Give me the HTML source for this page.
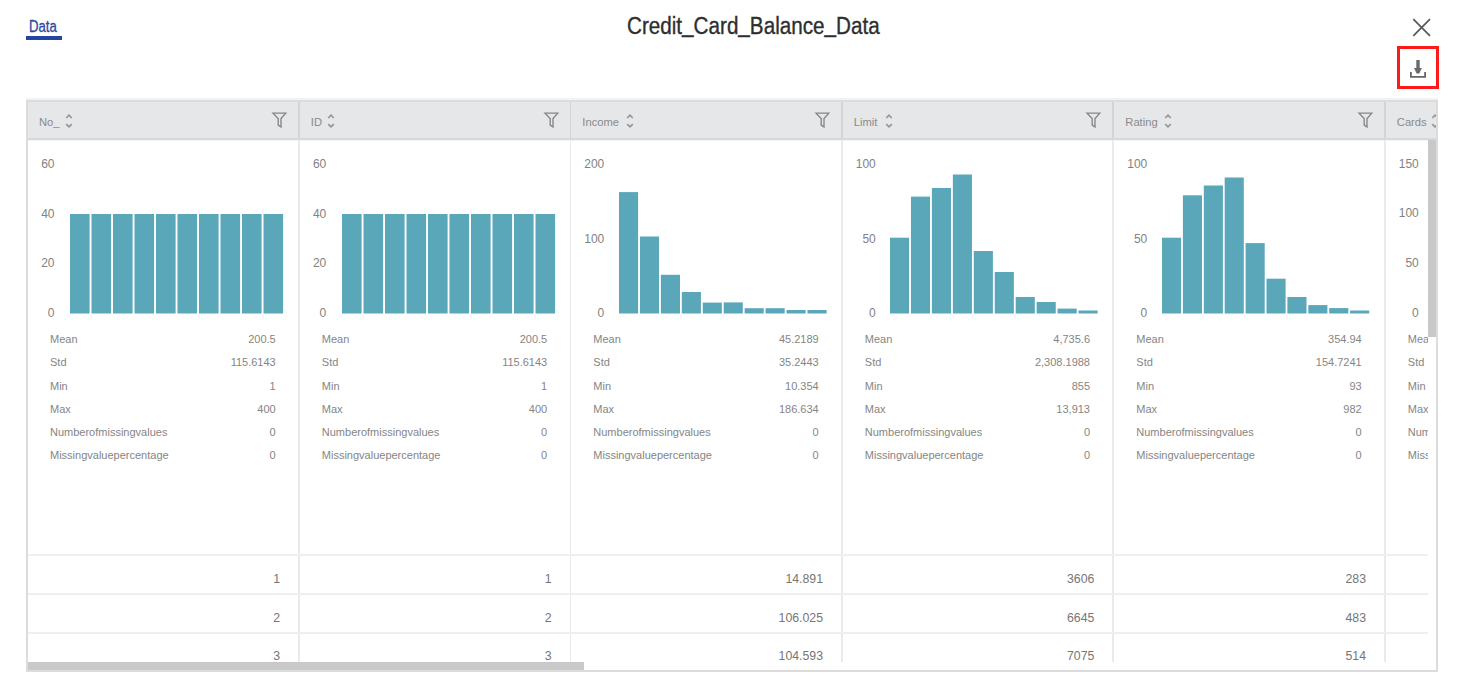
<!DOCTYPE html><html><head><meta charset="utf-8"><style>html,body{margin:0;padding:0;background:#fff;width:1462px;height:694px;overflow:hidden;position:relative;font-family:"Liberation Sans", sans-serif;}.ab{position:absolute;}.t{position:absolute;white-space:nowrap;line-height:14px;height:14px;}.lab{font-size:12px;color:#828282;text-align:right;}.st{font-size:11px;color:#858585;}.rv{font-size:12.3px;color:#767676;}.hd{font-size:11.2px;color:#8a8a8a;}.bar{position:absolute;background:#5ba8bb;box-shadow:inset 0 0 0 0.6px #4f9fb3;}</style></head><body><div class="t" style="left:29.3px;top:18.6px;font-size:15.8px;line-height:16px;height:16px;font-weight:normal;color:#2f4a9e;-webkit-text-stroke:0.3px #2f4a9e;transform:scaleX(0.835);transform-origin:0 0;">Data</div><div class="ab" style="left:26px;top:36px;width:36px;height:3.5px;background:#2546a0;"></div><div class="t" style="left:626.7px;top:13px;height:26px;line-height:26px;font-size:23.5px;color:#2e2e2e;-webkit-text-stroke:0.35px #2e2e2e;transform:scaleX(0.879);transform-origin:0 0;">Credit<span style="position:relative;top:-2.5px">_</span>Card<span style="position:relative;top:-2.5px">_</span>Balance<span style="position:relative;top:-2.5px">_</span>Data</div><svg class="ab" style="left:1411px;top:16.5px" width="21" height="21" viewBox="0 0 21 21"><path d="M2.3 2.2 L19 18.9 M19 2.2 L2.3 18.9" stroke="#5a5a5a" stroke-width="1.75" fill="none"/></svg><div class="ab" style="left:1397px;top:46px;width:35.6px;height:37px;border:3px solid #ff1a1a;box-sizing:content-box;"></div><svg class="ab" style="left:1400px;top:50px" width="36" height="36" viewBox="0 0 36 36"><rect x="16.3" y="10" width="3.4" height="12.5" fill="#6a6a6a"/><path d="M14 17.9 H21.9 L19.2 23.6 H16.7 Z" fill="#6a6a6a"/><path d="M10.9 22 V26.8 H25.1 V22" stroke="#666" stroke-width="1.8" fill="none"/></svg><div class="ab" style="left:26px;top:100px;width:1408px;height:568px;border:2px solid #dcdcdc;"></div><div class="ab" style="left:28px;top:102px;width:1408px;height:36px;background:#e6e7e9;"></div><div class="ab" style="left:28px;top:137.8px;width:1408px;height:2px;background:#d7d8da;"></div><div class="ab" style="left:26px;top:98px;width:1412px;height:2px;background:#f3f3f3;"></div><div class="ab" style="left:28px;top:139.8px;width:1400px;height:1.2px;background:#f6f6f6;"></div><div class="ab" style="left:298.10px;top:102px;width:1.8px;height:36px;background:#d3d4d6;"></div><div class="ab" style="left:298.10px;top:139.5px;width:1.8px;height:522px;background:#eaeaea;"></div><div class="ab" style="left:569.60px;top:102px;width:1.8px;height:36px;background:#d3d4d6;"></div><div class="ab" style="left:569.60px;top:139.5px;width:1.8px;height:522px;background:#eaeaea;"></div><div class="ab" style="left:841.10px;top:102px;width:1.8px;height:36px;background:#d3d4d6;"></div><div class="ab" style="left:841.10px;top:139.5px;width:1.8px;height:522px;background:#eaeaea;"></div><div class="ab" style="left:1112.40px;top:102px;width:1.8px;height:36px;background:#d3d4d6;"></div><div class="ab" style="left:1112.40px;top:139.5px;width:1.8px;height:522px;background:#eaeaea;"></div><div class="ab" style="left:1384.10px;top:102px;width:1.8px;height:36px;background:#d3d4d6;"></div><div class="ab" style="left:1384.10px;top:139.5px;width:1.8px;height:522px;background:#eaeaea;"></div><div class="ab" style="left:28px;top:554.00px;width:1400px;height:2px;background:#efefef;"></div><div class="ab" style="left:28px;top:592.50px;width:1400px;height:2px;background:#efefef;"></div><div class="ab" style="left:28px;top:631.70px;width:1400px;height:2px;background:#efefef;"></div><div class="t hd" id="h0" style="left:39.00px;top:114.5px;">No_</div><div class="t hd" id="h1" style="left:310.80px;top:114.5px;">ID</div><div class="t hd" id="h2" style="left:582.30px;top:114.5px;">Income</div><div class="t hd" id="h3" style="left:853.80px;top:114.5px;">Limit</div><div class="t hd" id="h4" style="left:1125.30px;top:114.5px;">Rating</div><div class="t hd" id="h5" style="left:1396.80px;top:114.5px;">Cards</div><div class="ab" style="left:28px;top:102px;width:1400px;height:560px;overflow:hidden;"><div class="t lab" style="left:12.00px;top:54.50px;width:14.50px;">60</div><div class="t lab" style="left:12.00px;top:105.00px;width:14.50px;">40</div><div class="t lab" style="left:12.00px;top:154.00px;width:14.50px;">20</div><div class="t lab" style="left:12.00px;top:204.00px;width:14.50px;">0</div><svg class="ab" style="left:42.00px;top:48px" width="230" height="180" viewBox="0 0 230 180"><g fill="#5aa7ba"><rect x="0.00" y="64.00" width="19.60" height="99.50"/><rect x="21.50" y="64.00" width="19.60" height="99.50"/><rect x="43.00" y="64.00" width="19.60" height="99.50"/><rect x="64.50" y="64.00" width="19.60" height="99.50"/><rect x="86.00" y="64.00" width="19.60" height="99.50"/><rect x="107.50" y="64.00" width="19.60" height="99.50"/><rect x="129.00" y="64.00" width="19.60" height="99.50"/><rect x="150.50" y="64.00" width="19.60" height="99.50"/><rect x="172.00" y="64.00" width="19.60" height="99.50"/><rect x="193.50" y="64.00" width="19.60" height="99.50"/></g></svg><div class="t st" style="left:22.00px;top:230.10px;">Mean</div><div class="t st" style="right:1152.30px;top:230.10px;">200.5</div><div class="t st" style="left:22.00px;top:253.30px;">Std</div><div class="t st" style="right:1152.30px;top:253.30px;">115.6143</div><div class="t st" style="left:22.00px;top:276.50px;">Min</div><div class="t st" style="right:1152.30px;top:276.50px;">1</div><div class="t st" style="left:22.00px;top:299.70px;">Max</div><div class="t st" style="right:1152.30px;top:299.70px;">400</div><div class="t st" style="left:22.00px;top:322.90px;">Numberofmissingvalues</div><div class="t st" style="right:1152.30px;top:322.90px;">0</div><div class="t st" style="left:22.00px;top:346.00px;">Missingvaluepercentage</div><div class="t st" style="right:1152.30px;top:346.00px;">0</div><div class="t rv" style="right:1148.00px;top:469.60px;">1</div><div class="t rv" style="right:1148.00px;top:508.80px;">2</div><div class="t rv" style="right:1148.00px;top:546.90px;">3</div><div class="t lab" style="left:283.80px;top:54.50px;width:14.50px;">60</div><div class="t lab" style="left:283.80px;top:105.00px;width:14.50px;">40</div><div class="t lab" style="left:283.80px;top:154.00px;width:14.50px;">20</div><div class="t lab" style="left:283.80px;top:204.00px;width:14.50px;">0</div><svg class="ab" style="left:313.50px;top:48px" width="230" height="180" viewBox="0 0 230 180"><g fill="#5aa7ba"><rect x="0.00" y="64.00" width="19.60" height="99.50"/><rect x="21.50" y="64.00" width="19.60" height="99.50"/><rect x="43.00" y="64.00" width="19.60" height="99.50"/><rect x="64.50" y="64.00" width="19.60" height="99.50"/><rect x="86.00" y="64.00" width="19.60" height="99.50"/><rect x="107.50" y="64.00" width="19.60" height="99.50"/><rect x="129.00" y="64.00" width="19.60" height="99.50"/><rect x="150.50" y="64.00" width="19.60" height="99.50"/><rect x="172.00" y="64.00" width="19.60" height="99.50"/><rect x="193.50" y="64.00" width="19.60" height="99.50"/></g></svg><div class="t st" style="left:293.80px;top:230.10px;">Mean</div><div class="t st" style="right:880.80px;top:230.10px;">200.5</div><div class="t st" style="left:293.80px;top:253.30px;">Std</div><div class="t st" style="right:880.80px;top:253.30px;">115.6143</div><div class="t st" style="left:293.80px;top:276.50px;">Min</div><div class="t st" style="right:880.80px;top:276.50px;">1</div><div class="t st" style="left:293.80px;top:299.70px;">Max</div><div class="t st" style="right:880.80px;top:299.70px;">400</div><div class="t st" style="left:293.80px;top:322.90px;">Numberofmissingvalues</div><div class="t st" style="right:880.80px;top:322.90px;">0</div><div class="t st" style="left:293.80px;top:346.00px;">Missingvaluepercentage</div><div class="t st" style="right:880.80px;top:346.00px;">0</div><div class="t rv" style="right:876.50px;top:469.60px;">1</div><div class="t rv" style="right:876.50px;top:508.80px;">2</div><div class="t rv" style="right:876.50px;top:546.90px;">3</div><div class="t lab" style="left:555.30px;top:54.70px;width:21.00px;">200</div><div class="t lab" style="left:555.30px;top:129.50px;width:21.00px;">100</div><div class="t lab" style="left:555.30px;top:204.00px;width:21.00px;">0</div><svg class="ab" style="left:591.00px;top:48px" width="230" height="180" viewBox="0 0 230 180"><g fill="#5aa7ba"><rect x="0.00" y="42.10" width="19.10" height="121.40"/><rect x="20.94" y="86.50" width="19.10" height="77.00"/><rect x="41.88" y="124.80" width="19.10" height="38.70"/><rect x="62.82" y="142.00" width="19.10" height="21.50"/><rect x="83.76" y="152.60" width="19.10" height="10.90"/><rect x="104.70" y="152.40" width="19.10" height="11.10"/><rect x="125.64" y="158.20" width="19.10" height="5.30"/><rect x="146.58" y="158.20" width="19.10" height="5.30"/><rect x="167.52" y="160.00" width="19.10" height="3.50"/><rect x="188.46" y="160.00" width="19.10" height="3.50"/></g></svg><div class="t st" style="left:565.30px;top:230.10px;">Mean</div><div class="t st" style="right:609.30px;top:230.10px;">45.2189</div><div class="t st" style="left:565.30px;top:253.30px;">Std</div><div class="t st" style="right:609.30px;top:253.30px;">35.2443</div><div class="t st" style="left:565.30px;top:276.50px;">Min</div><div class="t st" style="right:609.30px;top:276.50px;">10.354</div><div class="t st" style="left:565.30px;top:299.70px;">Max</div><div class="t st" style="right:609.30px;top:299.70px;">186.634</div><div class="t st" style="left:565.30px;top:322.90px;">Numberofmissingvalues</div><div class="t st" style="right:609.30px;top:322.90px;">0</div><div class="t st" style="left:565.30px;top:346.00px;">Missingvaluepercentage</div><div class="t st" style="right:609.30px;top:346.00px;">0</div><div class="t rv" style="right:605.00px;top:469.60px;">14.891</div><div class="t rv" style="right:605.00px;top:508.80px;">106.025</div><div class="t rv" style="right:605.00px;top:546.90px;">104.593</div><div class="t lab" style="left:826.80px;top:54.50px;width:21.00px;">100</div><div class="t lab" style="left:826.80px;top:129.50px;width:21.00px;">50</div><div class="t lab" style="left:826.80px;top:204.00px;width:21.00px;">0</div><svg class="ab" style="left:862.00px;top:48px" width="230" height="180" viewBox="0 0 230 180"><g fill="#5aa7ba"><rect x="0.00" y="87.70" width="19.10" height="75.80"/><rect x="20.95" y="46.60" width="19.10" height="116.90"/><rect x="41.90" y="38.00" width="19.10" height="125.50"/><rect x="62.85" y="24.50" width="19.10" height="139.00"/><rect x="83.80" y="101.00" width="19.10" height="62.50"/><rect x="104.75" y="122.00" width="19.10" height="41.50"/><rect x="125.70" y="147.00" width="19.10" height="16.50"/><rect x="146.65" y="152.00" width="19.10" height="11.50"/><rect x="167.60" y="158.60" width="19.10" height="4.90"/><rect x="188.55" y="160.50" width="19.10" height="3.00"/></g></svg><div class="t st" style="left:836.80px;top:230.10px;">Mean</div><div class="t st" style="right:338.00px;top:230.10px;">4,735.6</div><div class="t st" style="left:836.80px;top:253.30px;">Std</div><div class="t st" style="right:338.00px;top:253.30px;">2,308.1988</div><div class="t st" style="left:836.80px;top:276.50px;">Min</div><div class="t st" style="right:338.00px;top:276.50px;">855</div><div class="t st" style="left:836.80px;top:299.70px;">Max</div><div class="t st" style="right:338.00px;top:299.70px;">13,913</div><div class="t st" style="left:836.80px;top:322.90px;">Numberofmissingvalues</div><div class="t st" style="right:338.00px;top:322.90px;">0</div><div class="t st" style="left:836.80px;top:346.00px;">Missingvaluepercentage</div><div class="t st" style="right:338.00px;top:346.00px;">0</div><div class="t rv" style="right:333.70px;top:469.60px;">3606</div><div class="t rv" style="right:333.70px;top:508.80px;">6645</div><div class="t rv" style="right:333.70px;top:546.90px;">7075</div><div class="t lab" style="left:1098.30px;top:54.50px;width:21.00px;">100</div><div class="t lab" style="left:1098.30px;top:129.50px;width:21.00px;">50</div><div class="t lab" style="left:1098.30px;top:204.00px;width:21.00px;">0</div><svg class="ab" style="left:1133.80px;top:48px" width="230" height="180" viewBox="0 0 230 180"><g fill="#5aa7ba"><rect x="0.00" y="87.70" width="19.10" height="75.80"/><rect x="20.90" y="45.30" width="19.10" height="118.20"/><rect x="41.80" y="35.50" width="19.10" height="128.00"/><rect x="62.70" y="27.50" width="19.10" height="136.00"/><rect x="83.60" y="93.10" width="19.10" height="70.40"/><rect x="104.50" y="128.70" width="19.10" height="34.80"/><rect x="125.40" y="147.00" width="19.10" height="16.50"/><rect x="146.30" y="155.10" width="19.10" height="8.40"/><rect x="167.20" y="158.10" width="19.10" height="5.40"/><rect x="188.10" y="160.50" width="19.10" height="3.00"/></g></svg><div class="t st" style="left:1108.30px;top:230.10px;">Mean</div><div class="t st" style="right:66.30px;top:230.10px;">354.94</div><div class="t st" style="left:1108.30px;top:253.30px;">Std</div><div class="t st" style="right:66.30px;top:253.30px;">154.7241</div><div class="t st" style="left:1108.30px;top:276.50px;">Min</div><div class="t st" style="right:66.30px;top:276.50px;">93</div><div class="t st" style="left:1108.30px;top:299.70px;">Max</div><div class="t st" style="right:66.30px;top:299.70px;">982</div><div class="t st" style="left:1108.30px;top:322.90px;">Numberofmissingvalues</div><div class="t st" style="right:66.30px;top:322.90px;">0</div><div class="t st" style="left:1108.30px;top:346.00px;">Missingvaluepercentage</div><div class="t st" style="right:66.30px;top:346.00px;">0</div><div class="t rv" style="right:62.00px;top:469.60px;">283</div><div class="t rv" style="right:62.00px;top:508.80px;">483</div><div class="t rv" style="right:62.00px;top:546.90px;">514</div><div class="t lab" style="left:1369.80px;top:54.50px;width:21.00px;">150</div><div class="t lab" style="left:1369.80px;top:104.00px;width:21.00px;">100</div><div class="t lab" style="left:1369.80px;top:154.00px;width:21.00px;">50</div><div class="t lab" style="left:1369.80px;top:204.00px;width:21.00px;">0</div><div class="t st" style="left:1379.80px;top:230.10px;">Mean</div><div class="t st" style="left:1379.80px;top:253.30px;">Std</div><div class="t st" style="left:1379.80px;top:276.50px;">Min</div><div class="t st" style="left:1379.80px;top:299.70px;">Max</div><div class="t st" style="left:1379.80px;top:322.90px;">Numberofmissingvalues</div><div class="t st" style="left:1379.80px;top:346.00px;">Missingvaluepercentage</div></div><div class="ab" style="left:0;top:0;width:1436px;height:694px;overflow:hidden;"><svg class="ab" style="left:64.10px;top:112px" width="10" height="18" viewBox="0 0 10 18"><path d="M2.2 6 L5 3.2 L7.8 6 M2.2 12.1 L5 14.9 L7.8 12.1" stroke="#959595" stroke-width="1.6" fill="none"/></svg><svg class="ab" style="left:271.00px;top:111.50px" width="16" height="17" viewBox="0 0 16 17"><path d="M2 1.1 H14.8 L10 6.6 V14.9 L7.2 13.1 V6.6 Z" stroke="#868686" stroke-width="1.35" fill="none" stroke-linejoin="miter"/></svg><svg class="ab" style="left:326.20px;top:112px" width="10" height="18" viewBox="0 0 10 18"><path d="M2.2 6 L5 3.2 L7.8 6 M2.2 12.1 L5 14.9 L7.8 12.1" stroke="#959595" stroke-width="1.6" fill="none"/></svg><svg class="ab" style="left:542.50px;top:111.50px" width="16" height="17" viewBox="0 0 16 17"><path d="M2 1.1 H14.8 L10 6.6 V14.9 L7.2 13.1 V6.6 Z" stroke="#868686" stroke-width="1.35" fill="none" stroke-linejoin="miter"/></svg><svg class="ab" style="left:625.00px;top:112px" width="10" height="18" viewBox="0 0 10 18"><path d="M2.2 6 L5 3.2 L7.8 6 M2.2 12.1 L5 14.9 L7.8 12.1" stroke="#959595" stroke-width="1.6" fill="none"/></svg><svg class="ab" style="left:814.00px;top:111.50px" width="16" height="17" viewBox="0 0 16 17"><path d="M2 1.1 H14.8 L10 6.6 V14.9 L7.2 13.1 V6.6 Z" stroke="#868686" stroke-width="1.35" fill="none" stroke-linejoin="miter"/></svg><svg class="ab" style="left:883.90px;top:112px" width="10" height="18" viewBox="0 0 10 18"><path d="M2.2 6 L5 3.2 L7.8 6 M2.2 12.1 L5 14.9 L7.8 12.1" stroke="#959595" stroke-width="1.6" fill="none"/></svg><svg class="ab" style="left:1085.30px;top:111.50px" width="16" height="17" viewBox="0 0 16 17"><path d="M2 1.1 H14.8 L10 6.6 V14.9 L7.2 13.1 V6.6 Z" stroke="#868686" stroke-width="1.35" fill="none" stroke-linejoin="miter"/></svg><svg class="ab" style="left:1163.00px;top:112px" width="10" height="18" viewBox="0 0 10 18"><path d="M2.2 6 L5 3.2 L7.8 6 M2.2 12.1 L5 14.9 L7.8 12.1" stroke="#959595" stroke-width="1.6" fill="none"/></svg><svg class="ab" style="left:1357.00px;top:111.50px" width="16" height="17" viewBox="0 0 16 17"><path d="M2 1.1 H14.8 L10 6.6 V14.9 L7.2 13.1 V6.6 Z" stroke="#868686" stroke-width="1.35" fill="none" stroke-linejoin="miter"/></svg><svg class="ab" style="left:1430.30px;top:112px" width="10" height="18" viewBox="0 0 10 18"><path d="M2.2 6 L5 3.2 L7.8 6 M2.2 12.1 L5 14.9 L7.8 12.1" stroke="#959595" stroke-width="1.6" fill="none"/></svg></div><div class="ab" style="left:1428px;top:140px;width:8px;height:196.5px;background:#c8c8c8;"></div><div class="ab" style="left:28px;top:662px;width:556px;height:8px;background:#c9c9c9;"></div></body></html>
